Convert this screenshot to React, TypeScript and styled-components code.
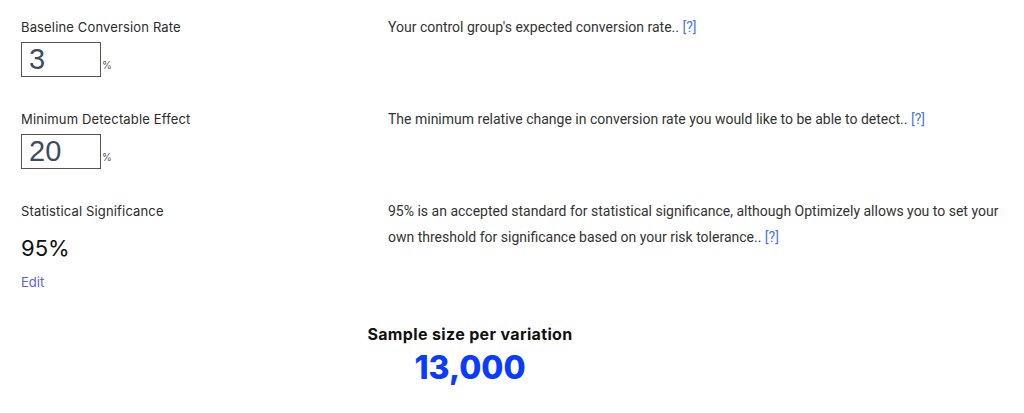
import React from "react";
import styled, { createGlobalStyle } from "styled-components";

const Global = createGlobalStyle`
  html, body { margin: 0; padding: 0; background: #ffffff; }
  body { font-family: Inter, "Noto Sans", sans-serif; color: #222; }
`;

const Page = styled.div`
  padding: 17px 21px 0 21px;
  width: 1024px;
  box-sizing: border-box;
`;

const Row = styled.div<{ $gap: number }>`
  display: grid;
  grid-template-columns: 367px 1fr;
  margin-bottom: ${(p) => p.$gap}px;
`;

const Field = styled.div`
  display: flex;
  flex-direction: column;
  align-items: flex-start;
`;

const Label = styled.div`
  font-size: 13px;
  line-height: 20px;
  letter-spacing: 0.15px;
  color: #2b2b2b;
`;

const InputWrap = styled.div`
  display: flex;
  align-items: flex-end;
  margin-top: 5px;
`;

const NumberInput = styled.input`
  width: 80px;
  height: 35px;
  box-sizing: border-box;
  border: 1px solid #555;
  padding: 0 7px;
  font-family: "Liberation Sans", Arial, sans-serif;
  font-size: 29px;
  color: #3e4c60;
  outline: none;
`;

const Unit = styled.span`
  font-size: 10px;
  color: #556;
  margin-left: 1px;
  margin-bottom: 6px;
`;

const Description = styled.p`
  margin: -3px 0 0 0;
  font-family: Roboto, "Liberation Sans", sans-serif;
  font-size: 14px;
  line-height: 26px;
  color: #333;
  max-width: 620px;
`;

const Help = styled.a`
  color: #4a78e6;
  text-decoration: none;
`;

const Big = styled.div`
  font-size: 22px;
  line-height: 30px;
  color: #111;
  margin-top: 12px;
`;

const EditLink = styled.a`
  font-size: 13px;
  line-height: 20px;
  color: #5b60f0;
  margin-top: 9px;
  text-decoration: none;
`;

const Summary = styled.div`
  display: flex;
  flex-direction: column;
  align-items: center;
  width: 898px;
`;

const SummaryTitle = styled.div`
  font-size: 16px;
  line-height: 22px;
  font-weight: 700;
  letter-spacing: 0.35px;
  color: #111;
`;

const SummaryValue = styled.div`
  font-size: 32px;
  line-height: 40px;
  font-weight: 800;
  color: #0a3cff;
  margin-top: 3px;
`;

export default function App() {
  return (
    <>
      <Global />
      <Page>
        <Row $gap={32}>
          <Field>
            <Label>Baseline Conversion Rate</Label>
            <InputWrap>
              <NumberInput defaultValue="3" />
              <Unit>%</Unit>
            </InputWrap>
          </Field>
          <Description>
            Your control group's expected conversion rate.. <Help href="#">[?]</Help>
          </Description>
        </Row>
        <Row $gap={32}>
          <Field>
            <Label>Minimum Detectable Effect</Label>
            <InputWrap>
              <NumberInput defaultValue="20" />
              <Unit>%</Unit>
            </InputWrap>
          </Field>
          <Description>
            The minimum relative change in conversion rate you would like to be able to detect.. <Help href="#">[?]</Help>
          </Description>
        </Row>
        <Row $gap={31}>
          <Field>
            <Label>Statistical Significance</Label>
            <Big>95%</Big>
            <EditLink href="#">Edit</EditLink>
          </Field>
          <Description>
            95% is an accepted standard for statistical significance, although Optimizely allows you to set your own threshold for significance based on your risk tolerance.. <Help href="#">[?]</Help>
          </Description>
        </Row>
        <Summary>
          <SummaryTitle>Sample size per variation</SummaryTitle>
          <SummaryValue>13,000</SummaryValue>
        </Summary>
      </Page>
    </>
  );
}
